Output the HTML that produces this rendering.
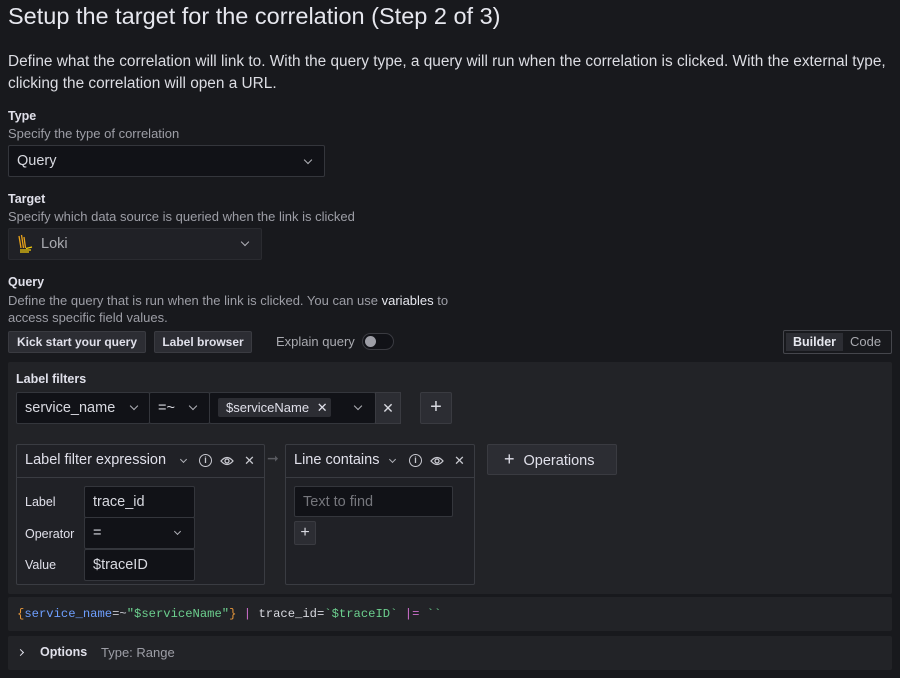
<!DOCTYPE html>
<html><head><meta charset="utf-8"><style>
*{box-sizing:border-box;margin:0;padding:0}
body{width:900px;height:678px;background:#18191d;color:#ccccdc;font-family:"Liberation Sans",sans-serif;position:relative;overflow:hidden}
.a{position:absolute;white-space:nowrap}
.lbl{font-size:12.5px;font-weight:bold;color:#e0e0ea}
.desc{font-size:13px;color:#9d9ea6}
.inp{position:absolute;background:#111217;border:1px solid #34363c;border-radius:2px;font-size:14.5px;color:#d8d9e0;display:flex;align-items:center;padding-left:8px}
.chev{position:absolute;width:6px;height:6px;border-right:1.3px solid #b0b1b8;border-bottom:1.3px solid #b0b1b8;transform:rotate(45deg)}
.btn{position:absolute;background:#2c2d33;border:1px solid #3a3b41;border-radius:2px;font-size:12px;font-weight:bold;color:#e0e0ea;display:flex;align-items:center;justify-content:center}
.card{position:absolute;background:#202126;border:1px solid #3a3c42;border-radius:2px}
.ch{position:absolute;left:0;right:0;top:0;height:33px;border-bottom:1px solid #3a3c42}
.mono{font-family:"Liberation Mono",monospace;font-size:12.2px}
</style></head><body>
<div class="a" style="left:8px;top:3px;font-size:23.5px;color:#e6e7ee">Setup the target for the correlation (Step 2 of 3)</div>
<div class="a" style="left:8px;top:51px;font-size:15.4px;line-height:22px;color:#dcdde3">Define what the correlation will link to. With the query type, a query will run when the correlation is clicked. With the external type,<br>clicking the correlation will open a URL.</div>

<div class="a lbl" style="left:8px;top:109px">Type</div>
<div class="a desc" style="left:8px;top:126px">Specify the type of correlation</div>
<div class="inp" style="left:8px;top:145px;width:317px;height:32px">Query</div>
<div class="chev" style="left:305px;top:157px"></div>

<div class="a lbl" style="left:8px;top:192px">Target</div>
<div class="a desc" style="left:8px;top:209px">Specify which data source is queried when the link is clicked</div>
<div class="inp" style="left:8px;top:228px;width:254px;height:32px;background:#202126;border-color:#2a2b30;color:#a9aab0;padding-left:32px">Loki</div>
<svg class="a" style="left:16px;top:234px" width="20" height="20" viewBox="0 0 20 20"><g stroke="#e8a21a" stroke-width="1.3"><path d="M3 2 L5 14M5.5 1 L7.5 14M8 3 L9.5 14"/><path d="M4 16 H15M4 18H13M10 14.5 L16 13" stroke="#f2cc0c"/></g></svg>
<div class="chev" style="left:242px;top:239px"></div>

<div class="a lbl" style="left:8px;top:275px">Query</div>
<div class="a desc" style="left:8px;top:292px;line-height:17px">Define the query that is run when the link is clicked. You can use <span style="color:#e6e7ee">variables</span> to<br>access specific field values.</div>

<div class="btn" style="left:8px;top:331px;width:138px;height:22px">Kick start your query</div>
<div class="btn" style="left:154px;top:331px;width:98px;height:22px">Label browser</div>
<div class="a" style="left:276px;top:334px;font-size:13px;color:#a9aab0">Explain query</div>
<div class="a" style="left:362px;top:333px;width:32px;height:17px;border:1px solid #3a3b41;border-radius:9px;background:#111217"></div>
<div class="a" style="left:365px;top:336px;width:11px;height:11px;border-radius:50%;background:#9d9ea6"></div>
<div class="a" style="left:783px;top:330px;width:109px;height:24px;border:1px solid #45464c;border-radius:2px"></div>
<div class="a" style="left:786px;top:333px;width:57px;height:18px;background:#2c2d33;font-size:12.5px;font-weight:bold;color:#e6e7ee;text-align:center;line-height:18px">Builder</div>
<div class="a" style="left:850px;top:334px;font-size:13px;color:#a9aab0">Code</div>

<div class="a" style="left:8px;top:362px;width:884px;height:232px;background:#222327;border-radius:2px"></div>
<div class="a lbl" style="left:16px;top:372px">Label filters</div>
<div class="inp" style="left:16px;top:392px;width:134px;height:32px">service_name</div>
<div class="chev" style="left:131px;top:403px"></div>
<div class="inp" style="left:149px;top:392px;width:61px;height:32px">=~</div>
<div class="chev" style="left:190px;top:403px"></div>
<div class="inp" style="left:209px;top:392px;width:167px;height:32px"></div>
<div class="a" style="left:218px;top:398px;width:113px;height:19px;background:#2c2d33;border-radius:2px;font-size:13px;color:#e0e0ea;padding-left:8px;line-height:19px">$serviceName <span style="margin-left:4px">✕</span></div>
<div class="chev" style="left:355px;top:403px"></div>
<div class="a" style="left:375px;top:392px;width:26px;height:32px;background:#2c2d33;border:1px solid #3a3b41;color:#d8d9e0;font-size:14px;text-align:center;line-height:30px">✕</div>
<div class="a" style="left:420px;top:392px;width:32px;height:32px;background:#2c2d33;border:1px solid #3a3b41;border-radius:2px;color:#d8d9e0;font-size:20px;text-align:center;line-height:29px">+</div>

<div class="card" style="left:16px;top:444px;width:249px;height:141px">
 <div class="ch"><span class="a" style="left:8px;top:7px;font-size:14.5px;color:#e0e0ea">Label filter expression</span>
 <div class="chev" style="left:164px;top:12px;width:5px;height:5px"></div>
 <span class="a" style="left:182px;top:9px;width:13px;height:13px;border:1.3px solid #c8c9d0;border-radius:50%;font-size:9px;text-align:center;line-height:11px;font-weight:bold;color:#c8c9d0">i</span>
 <svg class="a" style="left:203px;top:9px" width="14" height="14" viewBox="0 0 14 14"><path d="M1 7 Q7 0 13 7 Q7 14 1 7Z" fill="none" stroke="#c8c9d0" stroke-width="1.3"/><circle cx="7" cy="7" r="2" fill="none" stroke="#c8c9d0" stroke-width="1.3"/></svg>
 <span class="a" style="left:227px;top:8px;font-size:13px;color:#c8c9d0">✕</span></div>
 <span class="a" style="left:8px;top:50px;font-size:12.5px;color:#e0e0ea">Label</span>
 <span class="a" style="left:8px;top:82px;font-size:12.5px;color:#e0e0ea">Operator</span>
 <span class="a" style="left:8px;top:113px;font-size:12.5px;color:#e0e0ea">Value</span>
</div>
<div class="inp" style="left:84px;top:486px;width:111px;height:32px">trace_id</div>
<div class="inp" style="left:84px;top:517px;width:111px;height:32px">=</div>
<div class="chev" style="left:175px;top:529px;width:5px;height:5px"></div>
<div class="inp" style="left:84px;top:549px;width:111px;height:32px">$traceID</div>
<div class="a" style="left:267px;top:450px;color:#5a5b61;font-size:14px">➞</div>

<div class="card" style="left:285px;top:444px;width:190px;height:141px">
 <div class="ch"><span class="a" style="left:8px;top:7px;font-size:14.5px;color:#e0e0ea">Line contains</span>
 <div class="chev" style="left:104px;top:12px;width:5px;height:5px"></div>
 <span class="a" style="left:123px;top:9px;width:13px;height:13px;border:1.3px solid #c8c9d0;border-radius:50%;font-size:9px;text-align:center;line-height:11px;font-weight:bold;color:#c8c9d0">i</span>
 <svg class="a" style="left:144px;top:9px" width="14" height="14" viewBox="0 0 14 14"><path d="M1 7 Q7 0 13 7 Q7 14 1 7Z" fill="none" stroke="#c8c9d0" stroke-width="1.3"/><circle cx="7" cy="7" r="2" fill="none" stroke="#c8c9d0" stroke-width="1.3"/></svg>
 <span class="a" style="left:168px;top:8px;font-size:13px;color:#c8c9d0">✕</span></div>
</div>
<div class="inp" style="left:294px;top:486px;width:159px;height:31px;color:#75767c">Text to find</div>
<div class="a" style="left:294px;top:521px;width:22px;height:24px;background:#2c2d33;border:1px solid #3a3b41;border-radius:2px;color:#d8d9e0;font-size:16px;text-align:center;line-height:21px">+</div>

<div class="a" style="left:487px;top:444px;width:130px;height:31px;background:#2c2d33;border:1px solid #3a3b41;border-radius:2px;font-size:14.5px;color:#e0e0ea;line-height:29px;padding-left:16px"><span style="font-size:18px;margin-right:9px">+</span>Operations</div>

<div class="a" style="left:8px;top:597px;width:884px;height:34px;background:#222327;border-radius:2px"></div>
<div class="a mono" style="left:17px;top:607px"><span style="color:#e4953a">{</span><span style="color:#6e9fff">service_name</span><span style="color:#c8c9d0">=~</span><span style="color:#6ccf8e">"$serviceName"</span><span style="color:#e4953a">}</span> <span style="color:#d070d0">|</span> <span style="color:#d8d9e0">trace_id=</span><span style="color:#6ccf8e">`$traceID`</span> <span style="color:#d070d0">|=</span> <span style="color:#6ccf8e">``</span></div>

<div class="a" style="left:8px;top:636px;width:884px;height:34px;background:#222327;border-radius:2px"></div>
<div class="chev" style="left:18px;top:650px;width:5px;height:5px;transform:rotate(-45deg);border-color:#e0e0ea"></div>
<div class="a" style="left:40px;top:645px;font-size:12.5px;font-weight:bold;color:#e0e0ea">Options</div>
<div class="a" style="left:101px;top:645px;font-size:13px;color:#9d9ea6">Type: Range</div>
</body></html>
